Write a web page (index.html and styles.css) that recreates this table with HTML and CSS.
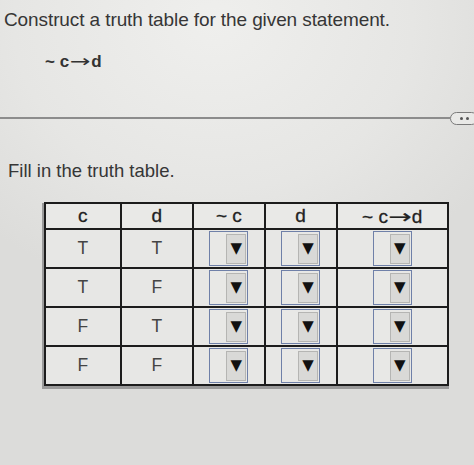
FILE: index.html
```html
<!DOCTYPE html>
<html>
<head>
<meta charset="utf-8">
<link rel="stylesheet" href="styles.css">
</head>
<body>
<div class="page">
  <h1 class="title">Construct a truth table for the given statement.</h1>
  <div class="formula">~ c<span class="arrow">→</span>d</div>
  <div class="rule-row">
    <div class="rule"></div>
    <div class="pill"><span class="dot"></span><span class="dot"></span></div>
  </div>
  <p class="prompt">Fill in the truth table.</p>
  <table class="truth">
    <thead>
      <tr><th class="c1">c</th><th class="c2">d</th><th class="c3">~ c</th><th class="c4">d</th><th class="c5">~ c<span class="arrow">→</span>d</th></tr>
    </thead>
    <tbody>
      <tr><td>T</td><td>T</td><td><span class="sel"><span class="btn">&#9660;</span></span></td><td><span class="sel"><span class="btn">&#9660;</span></span></td><td><span class="sel"><span class="btn">&#9660;</span></span></td></tr>
      <tr><td>T</td><td>F</td><td><span class="sel"><span class="btn">&#9660;</span></span></td><td><span class="sel"><span class="btn">&#9660;</span></span></td><td><span class="sel"><span class="btn">&#9660;</span></span></td></tr>
      <tr><td>F</td><td>T</td><td><span class="sel"><span class="btn">&#9660;</span></span></td><td><span class="sel"><span class="btn">&#9660;</span></span></td><td><span class="sel"><span class="btn">&#9660;</span></span></td></tr>
      <tr><td>F</td><td>F</td><td><span class="sel"><span class="btn">&#9660;</span></span></td><td><span class="sel"><span class="btn">&#9660;</span></span></td><td><span class="sel"><span class="btn">&#9660;</span></span></td></tr>
    </tbody>
  </table>
</div>
</body>
</html>
```

FILE: styles.css
```css
html, body {
  margin: 0;
  padding: 0;
}
body {
  width: 474px;
  height: 465px;
  overflow: hidden;
  background: radial-gradient(ellipse 70% 60% at 45% 5%, #efefed 0%, #e6e6e4 60%, #dcdcda 100%);
  font-family: "Liberation Sans", Arial, sans-serif;
  color: #363636;
}
.page {
  display: flex;
  flex-direction: column;
  padding-top: 9px;
}
.title {
  margin: 0;
  padding-left: 4px;
  font-size: 19px;
  font-weight: normal;
  line-height: 22px;
  letter-spacing: -0.1px;
}
.formula {
  margin-top: 19px;
  padding-left: 45px;
  font-size: 17px;
  font-weight: bold;
  line-height: 22px;
  color: #333;
}
.arrow {
  font-family: "DejaVu Sans", sans-serif;
  font-weight: normal;
  display: inline-block;
  transform: scaleX(1.45);
  margin: 0 4px;
}
.rule-row {
  margin-top: 38px;
  height: 14px;
  display: flex;
  align-items: center;
}
.rule {
  flex: 1;
  height: 2px;
  background: #8c8c8c;
}
.pill {
  width: 26px;
  height: 11px;
  margin-right: -4px;
  border: 1.5px solid #7a7a7a;
  border-radius: 7px;
  background: #e9e9e7;
  display: flex;
  align-items: center;
  justify-content: center;
  gap: 3px;
}
.dot {
  width: 3px;
  height: 3px;
  border-radius: 2px;
  background: #555;
}
.prompt {
  margin: 35px 0 0 0;
  padding-left: 8px;
  font-size: 18.5px;
  line-height: 22px;
}
.truth {
  margin: 20px 0 0 44px;
  border-collapse: collapse;
  border: 2px solid #3a3a3a;
  box-shadow: -1px 2px 0 1px #9a9a9a;
  background: #e7e7e5;
  width: 405px;
}
.truth th, .truth td {
  border: 2px solid #1c1c1c;
  padding: 0;
  text-align: center;
  vertical-align: middle;
}
.truth th {
  height: 24px;
  font-size: 19px;
  font-weight: normal;
  color: #222;
  background: #e9e9e7;
  -webkit-text-stroke: 0.3px #222;
}
.truth td {
  height: 37px;
  font-size: 17.5px;
  color: #444;
}
.c1 { width: 74px; }
.c2 { width: 71px; }
.c3 { width: 70px; }
.c4 { width: 70px; }
.c5 { width: 110px; }
.sel {
  display: inline-flex;
  justify-content: flex-end;
  align-items: center;
  box-sizing: border-box;
  width: 39px;
  height: 35px;
  border: 1px solid #6f80a8;
  background: #e8e8e6;
  padding-right: 1px;
  vertical-align: middle;
}
.btn {
  box-sizing: border-box;
  width: 20px;
  height: 30px;
  background: #d9d9d7;
  border: 1px solid #b5b5b3;
  display: flex;
  align-items: center;
  justify-content: center;
  font-family: "DejaVu Sans", sans-serif;
  font-size: 15px;
  color: #111;
  line-height: 1;
}
```
